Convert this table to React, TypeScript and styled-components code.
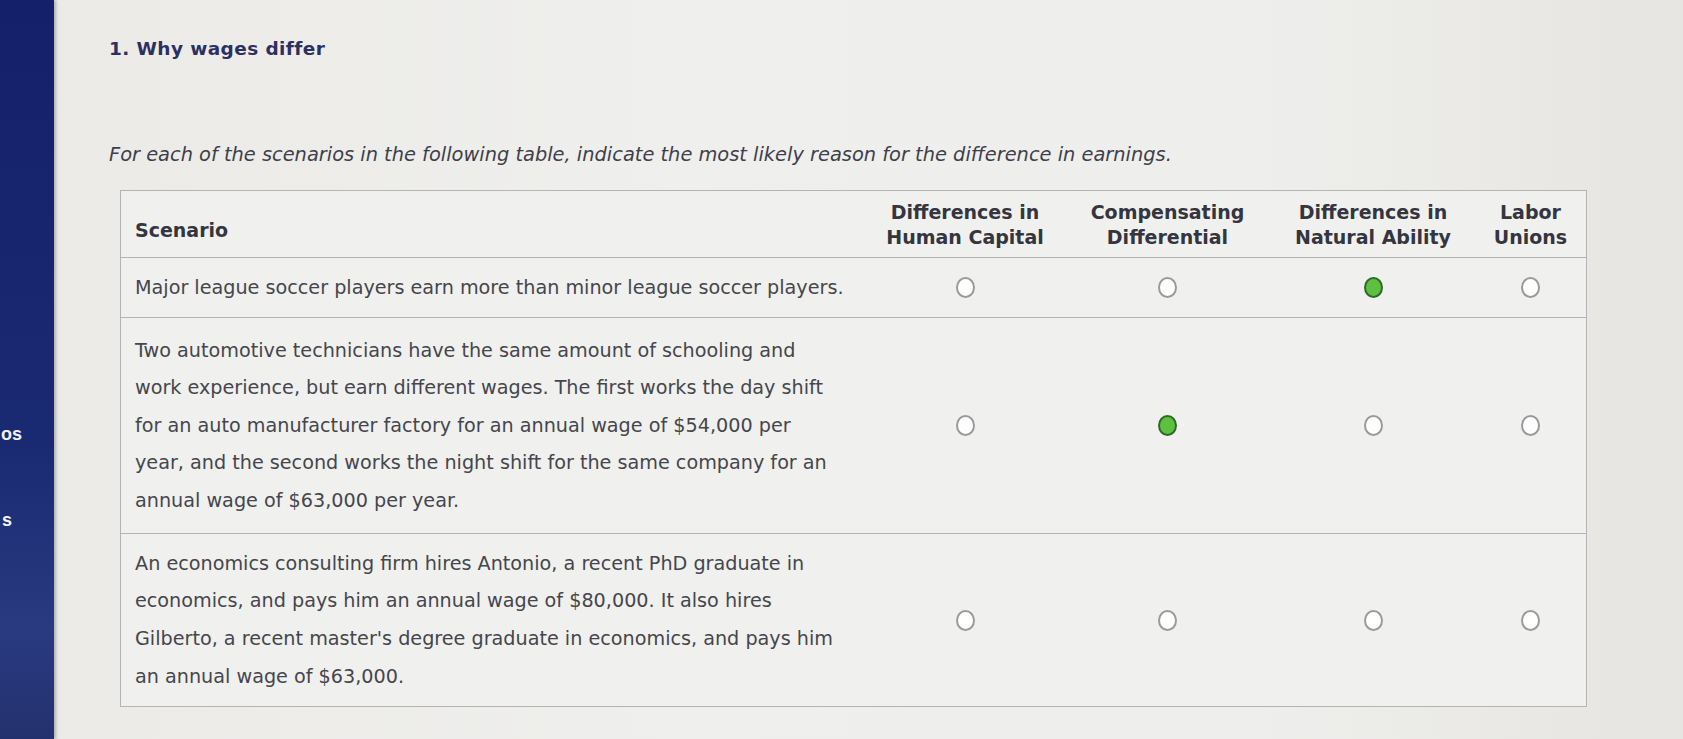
import React from "react";
import styled, { createGlobalStyle } from "styled-components";

const Global = createGlobalStyle`
  html, body { margin: 0; padding: 0; }
  body {
    font-family: "DejaVu Sans", Verdana, sans-serif;
    background: #ecebe8;
  }
`;

const Page = styled.div`
  display: flex;
  width: 1683px;
  height: 739px;
  overflow: hidden;
  background: linear-gradient(90deg, #ebeae7 0%, #efefed 40%, #eeeeec 75%, #e6e5e1 100%);
`;

const Sidebar = styled.aside`
  width: 54px;
  flex: none;
  background: linear-gradient(180deg, #14206a 0%, #1a2a72 60%, #2a3a80 85%, #23316f 100%);
  display: flex;
  flex-direction: column;
  align-items: flex-end;
  padding-top: 424px;
  gap: 66px;
  box-sizing: border-box;
  box-shadow: 2px 0 3px rgba(0, 0, 0, 0.25);
`;

const SideLabel = styled.span<{ $mr: number }>`
  color: #f2f2f6;
  font-family: "Liberation Sans", Arial, sans-serif;
  font-weight: 700;
  font-size: 18px;
  line-height: 20px;
  margin-right: ${(p) => p.$mr}px;
`;

const Main = styled.main`
  flex: 1;
  padding: 36px 0 0 55px;
  box-sizing: border-box;
`;

const Title = styled.h1`
  margin: 0;
  font-size: 18.5px;
  font-weight: 700;
  color: #2c3060;
  letter-spacing: 0.4px;
  line-height: 26px;
`;

const Instruction = styled.p`
  margin: 80px 0 0 0;
  font-size: 19.4px;
  font-style: italic;
  color: #3e3f4a;
  line-height: 26px;
`;

const Table = styled.div`
  margin: 22px 0 0 11px;
  width: 1465px;
  display: grid;
  grid-template-columns: 745px 198px 207px 204px 1fr;
  border: 1.5px solid #b4b4b4;
  background: #f0f0ee;
`;

const HeadCell = styled.div<{ $left?: boolean }>`
  display: flex;
  box-sizing: border-box;
  align-items: center;
  justify-content: ${(p) => (p.$left ? "flex-start" : "center")};
  text-align: ${(p) => (p.$left ? "left" : "center")};
  padding: 0 ${(p) => (p.$left ? "14px" : "2px")};
  padding-top: ${(p) => (p.$left ? "12px" : "2px")};
  height: 67px;
  font-weight: 700;
  font-size: 19px;
  line-height: 25px;
  color: #34353f;
  white-space: nowrap;
  border-bottom: 1.5px solid #b4b4b4;
`;

const Cell = styled.div<{ $h: number; $last?: boolean }>`
  height: ${(p) => p.$h}px;
  box-sizing: border-box;
  display: flex;
  align-items: center;
  border-bottom: ${(p) => (p.$last ? "none" : "1.5px solid #b4b4b4")};
`;

const TextCell = styled(Cell)`
  padding: 0 14px;
  font-size: 19.2px;
  line-height: 37.6px;
  color: #45464d;
  white-space: nowrap;
`;

const RadioCell = styled(Cell)`
  justify-content: center;
`;

const Radio = styled.span<{ $on?: boolean }>`
  width: 19px;
  height: 21px;
  border-radius: 50%;
  box-sizing: border-box;
  border: ${(p) => (p.$on ? "2.5px solid #2d6a2a" : "2px solid #9a9a9a")};
  background: ${(p) => (p.$on ? "#5ec03f" : "#ffffff")};
`;

type Row = { h: number; lines: string[]; sel: number };

const rows: Row[] = [
  {
    h: 60,
    lines: ["Major league soccer players earn more than minor league soccer players."],
    sel: 2,
  },
  {
    h: 216,
    lines: [
      "Two automotive technicians have the same amount of schooling and",
      "work experience, but earn different wages. The first works the day shift",
      "for an auto manufacturer factory for an annual wage of $54,000 per",
      "year, and the second works the night shift for the same company for an",
      "annual wage of $63,000 per year.",
    ],
    sel: 1,
  },
  {
    h: 172,
    lines: [
      "An economics consulting firm hires Antonio, a recent PhD graduate in",
      "economics, and pays him an annual wage of $80,000. It also hires",
      "Gilberto, a recent master's degree graduate in economics, and pays him",
      "an annual wage of $63,000.",
    ],
    sel: -1,
  },
];

const headers = [
  ["Differences in", "Human Capital"],
  ["Compensating", "Differential"],
  ["Differences in", "Natural Ability"],
  ["Labor", "Unions"],
];

export default function App() {
  return (
    <>
      <Global />
      <Page>
        <Sidebar>
          <SideLabel $mr={32}>os</SideLabel>
          <SideLabel $mr={42}>s</SideLabel>
        </Sidebar>
        <Main>
          <Title>1. Why wages differ</Title>
          <Instruction>
            For each of the scenarios in the following table, indicate the most likely reason for the difference in earnings.
          </Instruction>
          <Table>
            <HeadCell $left>Scenario</HeadCell>
            {headers.map((h, i) => (
              <HeadCell key={i}>
                <span>
                  {h[0]}
                  <br />
                  {h[1]}
                </span>
              </HeadCell>
            ))}
            {rows.map((r, ri) => (
              <React.Fragment key={ri}>
                <TextCell $h={r.h} $last={ri === rows.length - 1}>
                  <span>
                    {r.lines.map((l, li) => (
                      <React.Fragment key={li}>
                        {l}
                        {li < r.lines.length - 1 && <br />}
                      </React.Fragment>
                    ))}
                  </span>
                </TextCell>
                {[0, 1, 2, 3].map((c) => (
                  <RadioCell key={c} $h={r.h} $last={ri === rows.length - 1}>
                    <Radio $on={r.sel === c} />
                  </RadioCell>
                ))}
              </React.Fragment>
            ))}
          </Table>
        </Main>
      </Page>
    </>
  );
}
